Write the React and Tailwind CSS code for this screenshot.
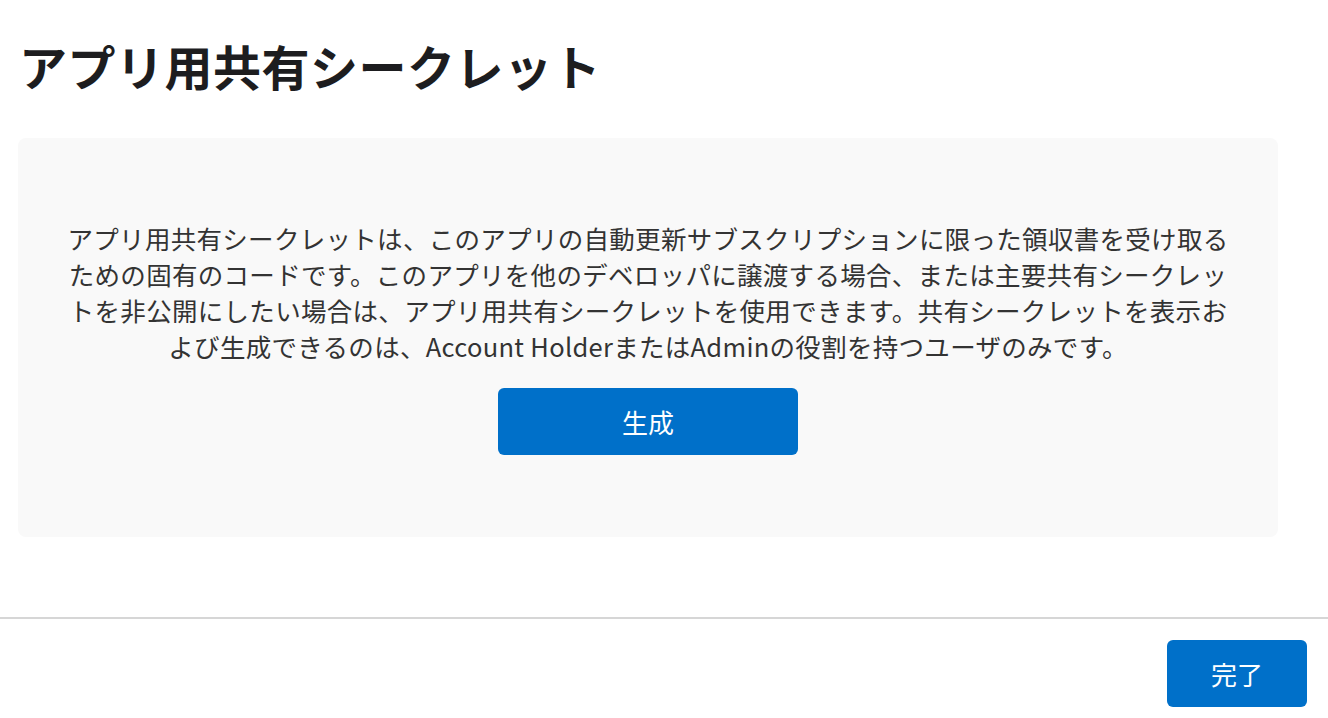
import React from 'react';

const FONT = { fontFamily: '"Noto Sans CJK JP", "Noto Sans", sans-serif' };

const LINES = [
  'アプリ用共有シークレットは、このアプリの自動更新サブスクリプションに限った領収書を受け取る',
  'ための固有のコードです。このアプリを他のデベロッパに譲渡する場合、または主要共有シークレッ',
  'トを非公開にしたい場合は、アプリ用共有シークレットを使用できます。共有シークレットを表示お',
  'よび生成できるのは、Account HolderまたはAdminの役割を持つユーザのみです。',
];

export default function App() {
  return (
    <div className="h-[718px] w-[1328px] bg-white flex flex-col overflow-hidden" style={FONT}>
      <h1 className="pl-[19px] pt-[38px] text-[48px] leading-[54px] font-bold text-[#1d1d1f] tracking-[0.5px]">
        アプリ用共有シークレット
      </h1>

      <div className="mx-[18px] mt-[46px] w-[1260px] h-[399px] bg-[#f9f9f9] rounded-lg flex flex-col items-center pt-[82px]">
        <p className="text-[25.5px] leading-[36px] text-[#333333] text-center whitespace-nowrap tracking-[0.3px]">
          {LINES.map((l) => (
            <span key={l} className="block">{l}</span>
          ))}
        </p>
        <button className="mt-[24px] w-[300px] h-[67px] rounded-md bg-[#0070c9] text-white text-[26px]">
          生成
        </button>
      </div>

      <div className="mt-[80px] h-[2px] bg-[#d6d6d6]" />

      <div className="flex justify-end pr-[21px] pt-[21px]">
        <button className="w-[140px] h-[67px] rounded-md bg-[#0070c9] text-white text-[26px]">
          完了
        </button>
      </div>
    </div>
  );
}
